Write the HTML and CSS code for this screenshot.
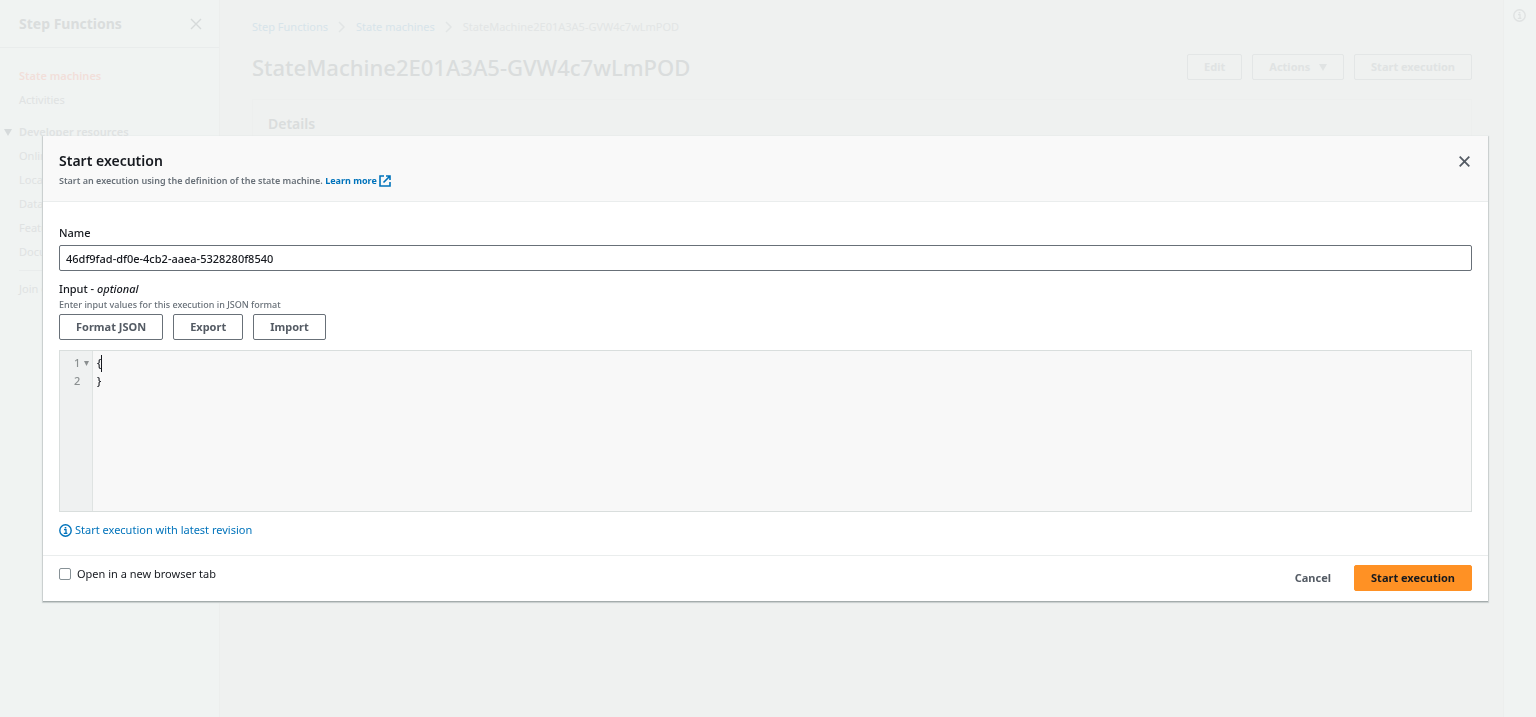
FILE: index.html
```html
<!DOCTYPE html>
<html lang="en">
<head>
<meta charset="utf-8">
<title>Step Functions</title>
<link rel="stylesheet" href="styles.css">
</head>
<body>
<div class="app">
  <aside class="sidebar">
    <div class="sidebar-head">
      <h2 class="service">Step Functions</h2>
      <button class="icon-btn" type="button" aria-label="Close navigation"><svg width="12" height="12" viewBox="0 0 12 12"><path d="M1 1l10 10M11 1L1 11" fill="none" stroke="currentColor" stroke-width="1.4"/></svg></button>
    </div>
    <nav class="nav">
      <a class="nav-link active" href="#">State machines</a>
      <a class="nav-link" href="#">Activities</a>
      <div class="nav-group"><svg class="nav-caret" width="8" height="7" viewBox="0 0 8 7"><path d="M0 0h8L4 7z" fill="currentColor"/></svg>Developer resources</div>
      <a class="nav-link" href="#">Online learning workshop</a>
      <a class="nav-link" href="#">Local Development</a>
      <a class="nav-link" href="#">Data flow simulator</a>
      <a class="nav-link" href="#">Feature spotlight</a>
      <a class="nav-link" href="#">Documentation</a>
      <hr class="nav-rule">
      <a class="nav-link" href="#">Join our feedback panel</a>
    </nav>
  </aside>
  <main class="main">
    <nav class="crumbs" aria-label="Breadcrumb">
      <a class="crumb" href="#">Step Functions</a>
      <svg width="8" height="12" viewBox="0 0 8 12"><path d="M1 1l5 5-5 5" fill="none" stroke="currentColor" stroke-width="1.5"/></svg>
      <a class="crumb" href="#">State machines</a>
      <svg width="8" height="12" viewBox="0 0 8 12"><path d="M1 1l5 5-5 5" fill="none" stroke="currentColor" stroke-width="1.5"/></svg>
      <span>StateMachine2E01A3A5-GVW4c7wLmPOD</span>
    </nav>
    <div class="title-row">
      <h1 class="title">StateMachine2E01A3A5-GVW4c7wLmPOD</h1>
      <div class="title-actions">
        <button class="btn faded" type="button">Edit</button>
        <button class="btn faded" type="button">Actions <svg class="btn-caret" width="8" height="7" viewBox="0 0 8 7"><path d="M0 0h8L4 7z" fill="currentColor"/></svg></button>
        <button class="btn faded" type="button">Start execution</button>
      </div>
    </div>
    <section class="details"><h2 class="details-title">Details</h2></section>
  </main>
  <aside class="tools">
    <button class="icon-btn" type="button" aria-label="Info"><svg width="13" height="13" viewBox="0 0 13 13"><circle cx="6.500" cy="6.500" r="5.700" fill="none" stroke="currentColor" stroke-width="1.400"/><path d="M5 5.700h2v3.600M4.800 9.400h3.600" fill="none" stroke="currentColor" stroke-width="1.300"/><path d="M5.700 3h1.600v1.500H5.700z" fill="currentColor"/></svg></button>
  </aside>
</div>

<div class="overlay">
  <form class="modal" role="dialog" aria-labelledby="modal-title">
    <header class="modal-head">
      <div>
        <h2 class="modal-title" id="modal-title">Start execution</h2>
        <p class="modal-desc">Start an execution using the definition of the state machine. <a class="learn" href="#">Learn more <svg class="ext" width="12" height="12" viewBox="0 0 12 12"><path d="M5 1H1v10h10V7M7 1h4v4M11 1L4.500 7.500" fill="none" stroke="currentColor" stroke-width="1.600"/></svg></a></p>
      </div>
      <button class="icon-btn close" type="button" aria-label="Close"><svg width="11" height="11" viewBox="0 0 11 11"><path d="M.7.7l9.600 9.600M10.300.7L.7 10.300" fill="none" stroke="currentColor" stroke-width="1.800"/></svg></button>
    </header>
    <div class="modal-body">
      <label class="label" for="name">Name</label>
      <input class="text-input" id="name" type="text" value="46df9fad-df0e-4cb2-aaea-5328280f8540">
      <div class="label input-label">Input - <em>optional</em></div>
      <p class="hint">Enter input values for this execution in JSON format</p>
      <div class="btn-row">
        <button class="btn" type="button">Format JSON</button>
        <button class="btn" type="button">Export</button>
        <button class="btn" type="button">Import</button>
      </div>
      <div class="editor">
        <div class="gutter">
          <div class="line-no">1<svg class="fold" width="5" height="5" viewBox="0 0 5 5"><path d="M0 0h5L2.500 5z" fill="currentColor"/></svg></div>
          <div class="line-no">2</div>
        </div>
        <div class="code">
          <div class="code-line">{<span class="cursor"></span></div>
          <div class="code-line">}</div>
        </div>
      </div>
      <a class="revision" href="#"><svg width="13" height="13" viewBox="0 0 13 13"><circle cx="6.500" cy="6.500" r="5.700" fill="none" stroke="currentColor" stroke-width="1.400"/><path d="M5 5.700h2v3.600M4.800 9.400h3.600" fill="none" stroke="currentColor" stroke-width="1.300"/><path d="M5.700 3h1.600v1.500H5.700z" fill="currentColor"/></svg>Start execution with latest revision</a>
    </div>
    <footer class="modal-foot">
      <label class="check"><input class="check-box" type="checkbox">Open in a new browser tab</label>
      <div class="foot-actions">
        <button class="btn link" type="button">Cancel</button>
        <button class="btn primary" type="button">Start execution</button>
      </div>
    </footer>
  </form>
</div>
</body>
</html>
```
FILE: styles.css
```css
* { box-sizing: border-box; }
body {
  margin: 0;
  font: 11px/16px "Noto Sans", "Open Sans", sans-serif;
  color: #16191f;
  background: #eff1f0;
}
h1, h2, p { margin: 0; }
a { text-decoration: none; color: inherit; }
svg { flex: none; }
button, input { font: inherit; color: inherit; }

.app { display: flex; min-height: 100vh; color: #dfe2e2; }
.icon-btn { display: flex; padding: 0; border: 0; background: none; }

.sidebar { width: 220px; flex: none; background: #f0f3f2; border-right: 1px solid #eceeed; }
.sidebar-head {
  display: flex; align-items: center; justify-content: space-between;
  height: 48px; padding: 0 17px 0 19px; border-bottom: 1px solid #e9ecec;
}
.service { font-size: 14px; line-height: 20px; color: #dadddd; }
.sidebar-head .icon-btn { color: #d6dada; }
.nav { display: flex; flex-direction: column; padding: 16px 19px; }
.nav-link, .nav-group { line-height: 24px; white-space: nowrap; }
.nav-link.active { font-weight: 600; color: #f2dfda; }
.nav-group { position: relative; margin-top: 8px; font-weight: 600; }
.nav-caret { position: absolute; left: -15px; top: 9px; color: #d6dadb; }
.nav-rule { width: 100%; margin: 6px 0; border: 0; border-top: 1px solid #e9ecec; }

.main { flex: 1; padding: 19px 31px 0 32px; }
.crumbs { display: flex; align-items: center; gap: 10px; color: #e2e5e5; }
.crumb { color: #d7e4ea; }
.title-row { display: flex; align-items: center; justify-content: space-between; margin-top: 16px; }
.title { font-size: 22px; line-height: 32px; font-weight: 500; color: #dadddd; }
.title-actions { display: flex; gap: 10px; }
.details { min-height: 300px; margin-top: 16px; padding: 14px 15px; border: 1px solid #edefee; }
.details-title { font-size: 14px; line-height: 20px; font-weight: 600; color: #dadddd; }
.tools { width: 33px; flex: none; padding: 9px 9px; border-left: 1px solid #eceeed; background: #f0f3f2; }

.btn {
  height: 26px; padding: 0 16px; border: 1px solid #687078; border-radius: 2px;
  background: #fff; color: #545b64; font-weight: 700; white-space: nowrap;
}
.btn.faded { color: #e0e3e3; border-color: #e3e6e6; background: none; }
.btn-caret { margin-left: 6px; }
.btn.link { border-color: transparent; background: none; }
.btn.primary { color: #16191f; background: #ff9124; border-color: #ff9124; }

.overlay { position: fixed; inset: 0; display: grid; align-items: center; padding: 20px 48px 0 43px; }
.modal { background: #fff; box-shadow: 0 1px 1px #a4acac, 0 1px 1px 1px #d3d8d8; }
.modal-head {
  display: flex; align-items: flex-start; justify-content: space-between;
  padding: 15px 18px 12px 16px; background: #f9f9f9; border-bottom: 1px solid #eaeded;
}
.modal-title { font-size: 14px; line-height: 20px; font-weight: 600; }
.modal-desc { margin-top: 2px; font-size: 9px; font-weight: 600; color: #687078; }
.learn { font-weight: 700; color: #0073bb; }
.ext { vertical-align: -3px; }
.close { margin-top: 5px; color: #545b64; }
.modal-body { padding: 23px 16px 17px; }
.label { display: block; font-weight: 500; }
.text-input {
  display: block; width: 100%; height: 26px; margin-top: 4px; padding: 0 6px;
  border: 1px solid #687078; border-radius: 2px; background: #fff; font-weight: 500;
}
.input-label { margin-top: 10px; }
.hint { font-size: 9px; font-weight: 500; color: #687078; }
.btn-row { display: flex; gap: 10px; margin-top: 1px; }
.editor { display: flex; height: 162px; margin-top: 10px; border: 1px solid #d9dedd; background: #f8f8f8; font-weight: 500; }
.gutter { width: 33px; padding: 3px 0; border-right: 1px solid #dfe3e2; background: #eff1f1; color: #8a8f90; }
.line-no { display: flex; align-items: center; gap: 4px; padding-left: 14px; line-height: 18px; }
.code { padding: 3px 4px; flex: 1; }
.code-line { display: flex; align-items: center; line-height: 18px; }
.cursor { width: 1px; height: 17px; background: #16191f; }
.revision { display: flex; align-items: center; gap: 3px; margin-top: 10px; color: #0073bb; }
.modal-foot {
  display: flex; align-items: flex-start; justify-content: space-between;
  padding: 9px 16px 10px; border-top: 1px solid #eaeded;
}
.check { display: flex; align-items: center; gap: 6px; padding-top: 1px; }
.check-box { appearance: none; width: 12px; height: 12px; margin: 0; border: 1px solid #879196; border-radius: 2px; background: #fff; }
.foot-actions { display: flex; gap: 6px; }
```
